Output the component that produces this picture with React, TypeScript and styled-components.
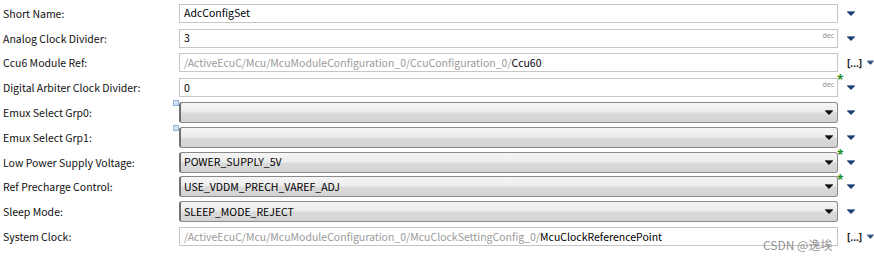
import React from "react";
import styled, { createGlobalStyle } from "styled-components";

type Row = {
	label: string;
	kind: "text" | "combo" | "ref";
	value?: string;
	prefix?: string;
	dec?: boolean;
	star?: boolean;
	marker?: boolean;
};

const rows: Row[] = [
	{ label: "Short Name:", kind: "text", value: "AdcConfigSet" },
	{ label: "Analog Clock Divider:", kind: "text", value: "3", dec: true },
	{
		label: "Ccu6 Module Ref:",
		kind: "ref",
		prefix: "/ActiveEcuC/Mcu/McuModuleConfiguration_0/CcuConfiguration_0/",
		value: "Ccu60",
	},
	{ label: "Digital Arbiter Clock Divider:", kind: "text", value: "0", dec: true, star: true },
	{ label: "Emux Select Grp0:", kind: "combo", value: "", marker: true },
	{ label: "Emux Select Grp1:", kind: "combo", value: "", marker: true },
	{ label: "Low Power Supply Voltage:", kind: "combo", value: "POWER_SUPPLY_5V", star: true },
	{ label: "Ref Precharge Control:", kind: "combo", value: "USE_VDDM_PRECH_VAREF_ADJ", star: true },
	{ label: "Sleep Mode:", kind: "combo", value: "SLEEP_MODE_REJECT" },
	{
		label: "System Clock:",
		kind: "ref",
		prefix: "/ActiveEcuC/Mcu/McuModuleConfiguration_0/McuClockSettingConfig_0/",
		value: "McuClockReferencePoint",
	},
];

const GlobalStyle = createGlobalStyle`
	html, body {
		margin: 0;
		padding: 0;
		background: #ffffff;
	}
	body {
		font-family: "Noto Sans CJK SC", "Noto Sans", sans-serif;
		font-size: 10.5px;
		color: #000;
	}
`;

const MenuArrow = () => (
	<svg width="8" height="5" viewBox="0 0 8 5">
		<rect x="0" y="0" width="8" height="1" fill="#6d86ad" />
		<path d="M0 1 L8 1 L4 5 Z" fill="#1d3e73" />
	</svg>
);

const ComboArrow = () => (
	<svg width="8" height="5" viewBox="0 0 8 5">
		<rect x="0" y="0" width="8" height="1" fill="#555" />
		<path d="M0 1 L8 1 L4 5 Z" fill="#111" />
	</svg>
);

const Marker = () => (
	<svg width="6" height="6" viewBox="0 0 6 6">
		<rect x="0.5" y="0.5" width="5" height="5" fill="#cfe0f7" stroke="#3b74c9" strokeDasharray="1 1" />
	</svg>
);

const App = () => {
	return (
		<>
			<GlobalStyle />
			<Form>
				{rows.map((r) => (
					<FormRow key={r.label}>
						<Label>{r.label}</Label>
						<FieldCell>
							{r.marker && (
								<MarkerSpot>
									<Marker />
								</MarkerSpot>
							)}
							{r.kind === "combo" ? (
								<Combo>
									<ComboText>{r.value}</ComboText>
									<ComboArrow />
								</Combo>
							) : (
								<TextBox>
									<BoxText>
										{r.prefix && <Greyed>{r.prefix}</Greyed>}
										{r.value}
									</BoxText>
									{r.dec && <Dec>dec</Dec>}
								</TextBox>
							)}
							{r.star && <Star>*</Star>}
						</FieldCell>
						<Trail>
							{r.kind === "ref" ? (
								<>
									<Browse>[...]</Browse>
									<MenuArrow />
								</>
							) : (
								<MenuArrow />
							)}
						</Trail>
					</FormRow>
				))}
				<Watermark>CSDN @逸埃</Watermark>
			</Form>
		</>
	);
};

const Form = styled.div`
	position: relative;
	width: 874px;
	height: 260px;
	padding-top: 1px;
	box-sizing: border-box;
`;

const FormRow = styled.div`
	display: grid;
	grid-template-columns: 179px 660px 35px;
	align-items: center;
	height: 24.8px;
`;

const Label = styled.div`
	padding-left: 3px;
	padding-top: 1px;
	white-space: nowrap;
	color: #111;
	line-height: 14px;
`;

const FieldCell = styled.div`
	position: relative;
	height: 100%;
	display: flex;
	align-items: center;
`;

const TextBox = styled.div`
	position: relative;
	box-sizing: border-box;
	width: 659px;
	height: 19px;
	border: 1px solid #c6c6c6;
	background: #fff;
	display: flex;
	align-items: center;
	padding-left: 4px;
`;

const BoxText = styled.span`
	white-space: nowrap;
	color: #000;
	line-height: 14px;
`;

const Greyed = styled.span`
	color: #9a9a9a;
`;

const Dec = styled.span`
	position: absolute;
	right: 3px;
	top: 1px;
	font-family: "Open Sans", sans-serif;
	font-size: 7px;
	line-height: 9px;
	color: #8a8a8a;
`;

const Combo = styled.div`
	box-sizing: border-box;
	width: 659px;
	height: 21px;
	border: 1px solid #8a8a8a;
	border-left: 2px solid #6f6f6f;
	border-radius: 3px;
	background: linear-gradient(#f6f6f6 0%, #ececec 45%, #dadada 55%, #d3d3d3 100%);
	display: flex;
	align-items: center;
	justify-content: space-between;
	padding: 0 4px 0 3px;
`;

const ComboText = styled.span`
	white-space: nowrap;
	color: #000;
	line-height: 14px;
`;

const MarkerSpot = styled.span`
	position: absolute;
	left: -6px;
	top: 0px;
	line-height: 0;
`;

const Star = styled.span`
	position: absolute;
	left: 658px;
	top: -1px;
	font-family: "Open Sans", sans-serif;
	color: #1a8a1a;
	font-size: 12px;
	font-weight: bold;
	line-height: 12px;
`;

const Trail = styled.div`
	display: flex;
	align-items: center;
	gap: 5px;
	padding-left: 8px;
	line-height: 0;
`;

const Browse = styled.span`
	font-family: "Open Sans", sans-serif;
	font-size: 10px;
	line-height: 12px;
	color: #222;
	font-weight: bold;
`;

const Watermark = styled.div`
	position: absolute;
	left: 763px;
	top: 238px;
	font-size: 12px;
	line-height: 14px;
	color: rgba(110, 110, 110, 0.75);
	white-space: nowrap;
`;

export default App;
